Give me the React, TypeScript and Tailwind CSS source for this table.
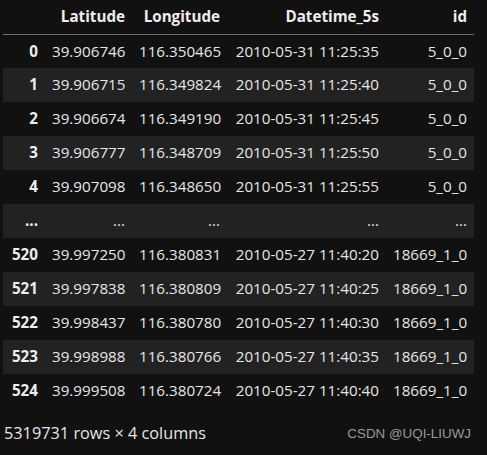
const rows: [string, string, string, string, string][] = [
  ['0', '39.906746', '116.350465', '2010-05-31 11:25:35', '5_0_0'],
  ['1', '39.906715', '116.349824', '2010-05-31 11:25:40', '5_0_0'],
  ['2', '39.906674', '116.349190', '2010-05-31 11:25:45', '5_0_0'],
  ['3', '39.906777', '116.348709', '2010-05-31 11:25:50', '5_0_0'],
  ['4', '39.907098', '116.348650', '2010-05-31 11:25:55', '5_0_0'],
  ['...', '...', '...', '...', '...'],
  ['520', '39.997250', '116.380831', '2010-05-27 11:40:20', '18669_1_0'],
  ['521', '39.997838', '116.380809', '2010-05-27 11:40:25', '18669_1_0'],
  ['522', '39.998437', '116.380780', '2010-05-27 11:40:30', '18669_1_0'],
  ['523', '39.998988', '116.380766', '2010-05-27 11:40:35', '18669_1_0'],
  ['524', '39.999508', '116.380724', '2010-05-27 11:40:40', '18669_1_0'],
];

const widths = ['w-[42px]', 'w-[87px]', 'w-[95px]', 'w-[159px]', 'w-[88px]'];
const headers = ['', 'Latitude', 'Longitude', 'Datetime_5s', 'id'];

export default function App() {
  return (
    <div
      className="w-[487px] h-[455px] bg-[#111111] text-[#e6e6e6] text-[15.2px] overflow-hidden"
      style={{ fontFamily: '"Open Sans", "Noto Sans", sans-serif' }}
    >
      <div className="pl-[3px]">
        <table className="border-collapse table-fixed w-[471px]">
          <thead>
            <tr className="h-[34px] border-b border-[#6b6b6b]">
              {headers.map((h, i) => (
                <th key={i} className={`${widths[i]} px-[7px] text-right font-bold text-[#ededed] leading-none`}>
                  {h}
                </th>
              ))}
            </tr>
          </thead>
          <tbody>
            {rows.map((r, ri) => (
              <tr key={ri} className={`h-[34px] ${ri % 2 === 1 ? 'bg-[#222222]' : ''}`}>
                {r.map((c, ci) => (
                  <td
                    key={ci}
                    className={`px-[7px] text-right whitespace-nowrap leading-none ${ci === 0 ? 'font-bold text-[#ededed]' : ''}`}
                  >
                    {c}
                  </td>
                ))}
              </tr>
            ))}
          </tbody>
        </table>
      </div>
      <div className="flex items-center justify-between pl-[4px] pr-[16px] mt-[13px]">
        <span className="text-[16.3px]">5319731 rows × 4 columns</span>
        <span className="text-[13.4px] text-[#9a9a9a] mt-[2px]" style={{ fontFamily: '"Liberation Sans", Arial, sans-serif' }}>
          CSDN @UQI-LIUWJ
        </span>
      </div>
    </div>
  );
}
